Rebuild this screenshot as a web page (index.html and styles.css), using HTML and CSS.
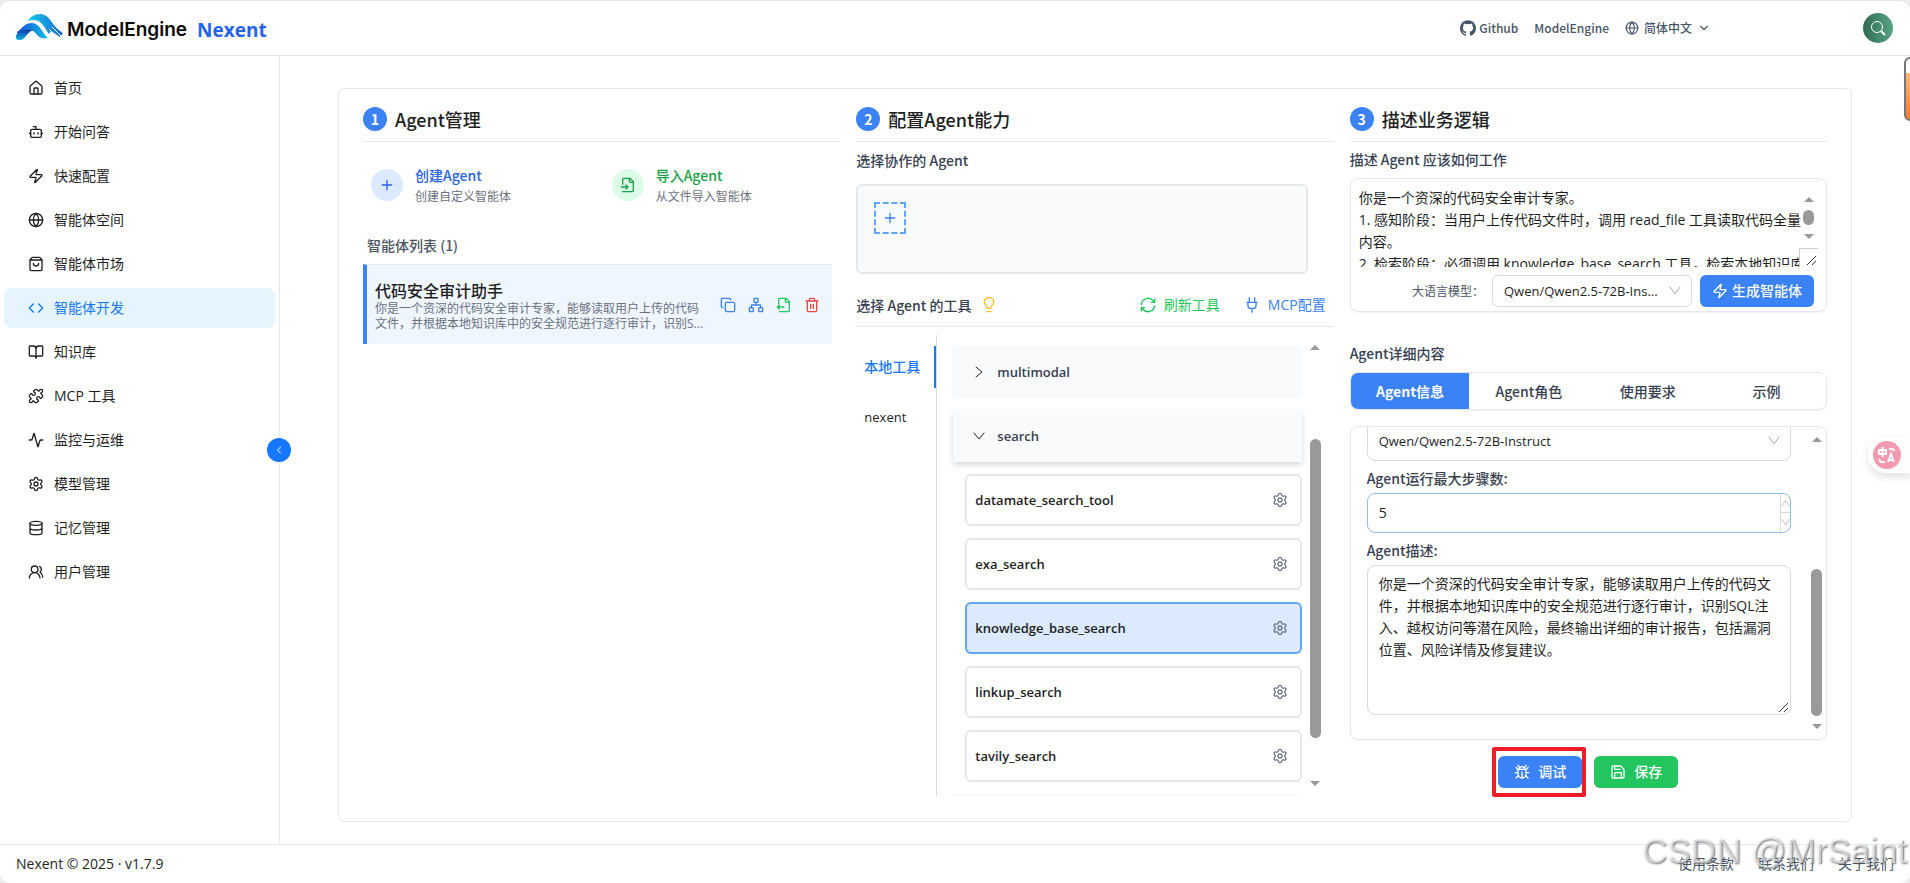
FILE: index.html
```
<!DOCTYPE html>
<html lang="zh-CN">
<head>
    <meta charset="UTF-8">
    <meta name="viewport" content="width=device-width, initial-scale=1.0">
    <title>Nexent</title>
    <link rel="stylesheet" href="styles.css">
</head>
<body>
    <!-- 公用图标 -->
    <svg class="sprite" aria-hidden="true">
        <symbol id="i-home" viewBox="0 0 24 24"><path d="M15 21v-8a1 1 0 0 0-1-1h-4a1 1 0 0 0-1 1v8"/><path d="M3 10a2 2 0 0 1 .709-1.528l7-5.999a2 2 0 0 1 2.582 0l7 5.999A2 2 0 0 1 21 10v9a2 2 0 0 1-2 2H5a2 2 0 0 1-2-2z"/></symbol>
        <symbol id="i-bot" viewBox="0 0 24 24"><path d="M12 8V4H8"/><rect width="16" height="12" x="4" y="8" rx="2"/><path d="M2 14h2M20 14h2M15 13v2M9 13v2"/></symbol>
        <symbol id="i-zap" viewBox="0 0 24 24"><path d="M4 14a1 1 0 0 1-.78-1.63l9.9-10.2a.5.5 0 0 1 .86.46l-1.92 6.02A1 1 0 0 0 13 10h7a1 1 0 0 1 .78 1.63l-9.9 10.2a.5.5 0 0 1-.86-.46l1.92-6.02A1 1 0 0 0 11 14z"/></symbol>
        <symbol id="i-globe" viewBox="0 0 24 24"><circle cx="12" cy="12" r="10"/><path d="M12 2a14.500 14.500 0 0 0 0 20 14.500 14.500 0 0 0 0-20M2 12h20"/></symbol>
        <symbol id="i-bag" viewBox="0 0 24 24"><path d="M3 6h18"/><path d="M7 2h10a2 2 0 0 1 1.600.8L20.600 5.500A2 2 0 0 1 21 6.700V20a2 2 0 0 1-2 2H5a2 2 0 0 1-2-2V6.700a2 2 0 0 1 .4-1.200L5.400 2.800A2 2 0 0 1 7 2z"/><path d="M16 11a4 4 0 0 1-8 0"/></symbol>
        <symbol id="i-code" viewBox="0 0 24 24"><path d="m16 18 6-6-6-6M8 6l-6 6 6 6"/></symbol>
        <symbol id="i-book" viewBox="0 0 24 24"><path d="M12 7v14"/><path d="M3 18a1 1 0 0 1-1-1V4a1 1 0 0 1 1-1h5a4 4 0 0 1 4 4 4 4 0 0 1 4-4h5a1 1 0 0 1 1 1v13a1 1 0 0 1-1 1h-6a3 3 0 0 0-3 3 3 3 0 0 0-3-3z"/></symbol>
        <symbol id="i-puzzle" viewBox="0 0 24 24"><path d="M15.390 4.390a1 1 0 0 0 1.680-.474 2.500 2.500 0 1 1 3.014 3.015 1 1 0 0 0-.474 1.680l1.683 1.682a2.414 2.414 0 0 1 0 3.414L19.610 15.390a1 1 0 0 1-1.680-.474 2.500 2.500 0 1 0-3.014 3.015 1 1 0 0 1 .474 1.680l-1.683 1.682a2.414 2.414 0 0 1-3.414 0L8.610 19.610a1 1 0 0 0-1.680.474 2.500 2.500 0 1 1-3.014-3.015 1 1 0 0 0 .474-1.680l-1.683-1.682a2.414 2.414 0 0 1 0-3.414L4.390 8.610a1 1 0 0 1 1.680.474 2.500 2.500 0 1 0 3.014-3.015 1 1 0 0 1-.474-1.680l1.683-1.682a2.414 2.414 0 0 1 3.414 0z"/></symbol>
        <symbol id="i-activity" viewBox="0 0 24 24"><path d="M22 12h-2.480a2 2 0 0 0-1.930 1.460l-2.350 8.360a.25.25 0 0 1-.48 0L9.240 2.180a.25.25 0 0 0-.48 0l-2.350 8.360A2 2 0 0 1 4.490 12H2"/></symbol>
        <symbol id="i-gear" viewBox="0 0 24 24"><path d="M9.671 4.136a2.340 2.340 0 0 1 4.659 0 2.340 2.340 0 0 0 3.319 1.915 2.340 2.340 0 0 1 2.330 4.033 2.340 2.340 0 0 0 0 3.831 2.340 2.340 0 0 1-2.330 4.033 2.340 2.340 0 0 0-3.319 1.915 2.340 2.340 0 0 1-4.659 0 2.340 2.340 0 0 0-3.320-1.915 2.340 2.340 0 0 1-2.330-4.033 2.340 2.340 0 0 0 0-3.831A2.340 2.340 0 0 1 6.350 6.051a2.340 2.340 0 0 0 3.319-1.915"/><circle cx="12" cy="12" r="3"/></symbol>
        <symbol id="i-db" viewBox="0 0 24 24"><ellipse cx="12" cy="5" rx="9" ry="3"/><path d="M3 5v14a9 3 0 0 0 18 0V5M3 12a9 3 0 0 0 18 0"/></symbol>
        <symbol id="i-users" viewBox="0 0 24 24"><path d="M18 21a8 8 0 0 0-16 0"/><circle cx="10" cy="8" r="5"/><path d="M22 20c0-3.370-2-6.500-4-8a5 5 0 0 0-.45-8.300"/></symbol>
        <symbol id="i-down" viewBox="0 0 24 24"><path d="m6 9 6 6 6-6"/></symbol>
        <symbol id="i-vee" viewBox="0 0 12 12"><path d="M1 2l5 7 5-7"/></symbol>
        <symbol id="i-fold" viewBox="0 0 12 12"><path d="M1 3l5 6 5-6"/></symbol>
        <symbol id="i-left" viewBox="0 0 24 24"><path d="m15 18-6-6 6-6"/></symbol>
        <symbol id="i-plus" viewBox="0 0 24 24"><path d="M5 12h14M12 5v14"/></symbol>
        <symbol id="i-import" viewBox="0 0 24 24"><path d="M4 11V4a2 2 0 0 1 2-2h9l5 5v13a2 2 0 0 1-2 2H4"/><path d="M14 2v4a2 2 0 0 0 2 2h4M2 15h10M9 18l3-3-3-3"/></symbol>
        <symbol id="i-export" viewBox="0 0 24 24"><path d="M4 10V4a2 2 0 0 1 2-2h9l5 5v13a2 2 0 0 1-2 2H5"/><path d="M14 2v4a2 2 0 0 0 2 2h4M12 15H2M5 12l-3 3 3 3"/></symbol>
        <symbol id="i-copy" viewBox="0 0 24 24"><rect width="14" height="14" x="8" y="8" rx="2"/><path d="M4 16a2 2 0 0 1-2-2V4a2 2 0 0 1 2-2h10a2 2 0 0 1 2 2"/></symbol>
        <symbol id="i-network" viewBox="0 0 24 24"><rect x="16" y="16" width="6" height="6" rx="1"/><rect x="2" y="16" width="6" height="6" rx="1"/><rect x="9" y="2" width="6" height="6" rx="1"/><path d="M5 16v-3a1 1 0 0 1 1-1h12a1 1 0 0 1 1 1v3M12 12V8"/></symbol>
        <symbol id="i-trash" viewBox="0 0 24 24"><path d="M3 6h18M19 6v14a2 2 0 0 1-2 2H7a2 2 0 0 1-2-2V6M8 6V4a2 2 0 0 1 2-2h4a2 2 0 0 1 2 2v2M10 11v6M14 11v6"/></symbol>
        <symbol id="i-bulb" viewBox="0 0 24 24"><path d="M9 17v-3a7 7 0 1 1 6 0v3zM9 22h6"/></symbol>
        <symbol id="i-refresh" viewBox="0 0 24 24"><path d="M2 11a10 10 0 0 1 18-5l2 2M22 3v5h-5M22 13a10 10 0 0 1-18 5l-2-2M2 21v-5h5"/></symbol>
        <symbol id="i-plug" viewBox="0 0 24 24"><path d="M12 23v-6M8 8V1M16 8V1M4 8h16M18 8v5a4 4 0 0 1-4 4h-4a4 4 0 0 1-4-4V8"/></symbol>
        <symbol id="i-bug" viewBox="0 0 24 24"><path d="M8 8a4 4 0 0 1 8 0M6 8h12v7a6 6 0 0 1-12 0zM12 12v9M6 13H2M22 13h-4M6 9L3 5M18 9l3-4M7 17l-4 4M17 17l4 4M8 5L6 2M16 5l2-3"/></symbol>
        <symbol id="i-save" viewBox="0 0 24 24"><path d="M15.200 3a2 2 0 0 1 1.400.6l3.800 3.800a2 2 0 0 1 .6 1.400V19a2 2 0 0 1-2 2H5a2 2 0 0 1-2-2V5a2 2 0 0 1 2-2zM17 21v-7a1 1 0 0 0-1-1H8a1 1 0 0 0-1 1v7M7 3v4a1 1 0 0 0 1 1h7"/></symbol>
        <symbol id="i-grip" viewBox="0 0 12 12"><path d="M2 11l9-9M7 11l4-4"/></symbol>
    </svg>

    <div class="app">
        <header class="header">
            <a class="brand" href="#">
                <svg class="logo" viewBox="0 0 48 28">
                    <defs>
                        <linearGradient id="g1" x1="0" x2="1"><stop offset="0" stop-color="#16cbe2"/><stop offset="1" stop-color="#1a66dc"/></linearGradient>
                        <linearGradient id="g2" x1="0" x2="1"><stop offset="0" stop-color="#1748d8"/><stop offset="1" stop-color="#14c4e4"/></linearGradient>
                        <linearGradient id="g3" x1="0" x2="0" y1="0" y2="1"><stop offset="0" stop-color="#0b3a9c"/><stop offset="1" stop-color="#12b6ee"/></linearGradient>
                    </defs>
                    <path fill="url(#g1)" d="M12 7C14 3 18 0 24 0c5 0 8 3 11 7 3 5 7 9 12 12l-3 4-9-6-2 3C29 15 26 6 18 6c-2 0-4 0-6 1z"/>
                    <path fill="url(#g2)" d="M1 18C6 15 8 9 16 9c8 0 10 10 16 15-4 1-8 0-10-2-3-3-4-6-7-5L5 26z"/>
                    <path fill="url(#g3)" d="M0 22c1-4 8-7 17-6-6 1-7 10-13 10-3 0-5-1-4-4z"/>
                    <path stroke="#fff" stroke-width="1" d="M33 15l9 9M36 13l9 9M39 11l8 8"/>
                </svg>
                <span class="brand-name">ModelEngine</span>
                <span class="brand-sub">Nexent</span>
            </a>
            <nav class="header-nav">
                <a href="#"><svg class="github" viewBox="0 0 24 24"><path d="M12 .297c-6.630 0-12 5.373-12 12 0 5.303 3.438 9.800 8.205 11.385.6.113.82-.258.82-.577 0-.285-.01-1.040-.015-2.040-3.338.724-4.042-1.610-4.042-1.610C4.422 18.070 3.633 17.700 3.633 17.700c-1.087-.744.084-.729.084-.729 1.205.084 1.838 1.236 1.838 1.236 1.070 1.835 2.809 1.305 3.495.998.108-.776.417-1.305.76-1.605-2.665-.3-5.466-1.332-5.466-5.930 0-1.310.465-2.380 1.235-3.220-.135-.303-.54-1.523.105-3.176 0 0 1.005-.322 3.300 1.230.96-.267 1.980-.399 3-.405 1.020.006 2.040.138 3 .405 2.280-1.552 3.285-1.230 3.285-1.230.645 1.653.24 2.873.12 3.176.765.84 1.230 1.910 1.230 3.220 0 4.610-2.805 5.625-5.475 5.920.42.36.81 1.096.81 2.220 0 1.606-.015 2.896-.015 3.286 0 .315.21.69.825.57C20.565 22.092 24 17.592 24 12.297c0-6.627-5.373-12-12-12"/></svg>Github</a>
                <a href="#">ModelEngine</a>
                <button class="lang" type="button"><svg class="icon s14"><use href="#i-globe"/></svg>简体中文<svg class="icon s14"><use href="#i-down"/></svg></button>
            </nav>
            <button class="avatar" type="button" aria-label="用户"><svg viewBox="0 0 16 16"><circle cx="7" cy="7" r="5.500"/><path d="M11 11l4 4" stroke-width="2"/></svg></button>
        </header>

        <div class="body">
            <aside class="sidebar">
                <nav class="menu">
                    <a href="#"><svg class="icon"><use href="#i-home"/></svg>首页</a>
                    <a href="#"><svg class="icon"><use href="#i-bot"/></svg>开始问答</a>
                    <a href="#"><svg class="icon"><use href="#i-zap"/></svg>快速配置</a>
                    <a href="#"><svg class="icon"><use href="#i-globe"/></svg>智能体空间</a>
                    <a href="#"><svg class="icon"><use href="#i-bag"/></svg>智能体市场</a>
                    <a href="#" class="selected"><svg class="icon"><use href="#i-code"/></svg>智能体开发</a>
                    <a href="#"><svg class="icon"><use href="#i-book"/></svg>知识库</a>
                    <a href="#"><svg class="icon"><use href="#i-puzzle"/></svg>MCP 工具</a>
                    <a href="#"><svg class="icon"><use href="#i-activity"/></svg>监控与运维</a>
                    <a href="#"><svg class="icon"><use href="#i-gear"/></svg>模型管理</a>
                    <a href="#"><svg class="icon"><use href="#i-db"/></svg>记忆管理</a>
                    <a href="#"><svg class="icon"><use href="#i-users"/></svg>用户管理</a>
                </nav>
                <button class="collapse-btn" type="button" aria-label="收起"><svg class="icon s12"><use href="#i-left"/></svg></button>
            </aside>

            <main class="main">
                <div class="card">
                    <!-- 1 Agent管理 -->
                    <section class="col">
                        <h2><span class="step">1</span>Agent管理</h2>
                        <div class="col-pad">
                            <div class="actions">
                                <button class="action blue" type="button">
                                    <span class="circle"><svg class="icon"><use href="#i-plus"/></svg></span>
                                    <span class="action-text"><b>创建Agent</b><small>创建自定义智能体</small></span>
                                </button>
                                <button class="action green" type="button">
                                    <span class="circle"><svg class="icon"><use href="#i-import"/></svg></span>
                                    <span class="action-text"><b>导入Agent</b><small>从文件导入智能体</small></span>
                                </button>
                            </div>
                            <h3 class="list-title">智能体列表 (1)</h3>
                            <div class="agent">
                                <div class="agent-info">
                                    <h4>代码安全审计助手</h4>
                                    <p>你是一个资深的代码安全审计专家，能够读取用户上传的代码文件，并根据本地知识库中的安全规范进行逐行审计，识别S...</p>
                                </div>
                                <div class="agent-btns">
                                    <button class="c-blue" type="button" aria-label="复制"><svg class="icon"><use href="#i-copy"/></svg></button>
                                    <button class="c-blue" type="button" aria-label="关系"><svg class="icon"><use href="#i-network"/></svg></button>
                                    <button class="c-green" type="button" aria-label="导出"><svg class="icon"><use href="#i-export"/></svg></button>
                                    <button class="c-red" type="button" aria-label="删除"><svg class="icon"><use href="#i-trash"/></svg></button>
                                </div>
                            </div>
                        </div>
                    </section>

                    <!-- 2 配置Agent能力 -->
                    <section class="col">
                        <h2><span class="step">2</span>配置Agent能力</h2>
                        <h3 class="collab-title">选择协作的 Agent</h3>
                        <div class="collab">
                            <button class="add" type="button" aria-label="添加"><svg class="icon"><use href="#i-plus"/></svg></button>
                        </div>
                        <div class="tools-head">
                            <h3>选择 Agent 的工具</h3>
                            <svg class="icon bulb"><use href="#i-bulb"/></svg>
                            <button class="c-green refresh" type="button"><svg class="icon"><use href="#i-refresh"/></svg>刷新工具</button>
                            <button class="c-blue" type="button"><svg class="icon"><use href="#i-plug"/></svg>MCP配置</button>
                        </div>
                        <div class="tools">
                            <div class="side-tabs">
                                <button class="selected" type="button">本地工具</button>
                                <button class="latin" type="button">nexent</button>
                            </div>
                            <div class="tool-list">
                                <button class="group" type="button"><svg class="icon s12 turn"><use href="#i-fold"/></svg>multimodal</button>
                                <button class="group open" type="button"><svg class="icon s12"><use href="#i-fold"/></svg>search</button>
                                <div class="tool">datamate_search_tool<button type="button" aria-label="设置"><svg class="icon"><use href="#i-gear"/></svg></button></div>
                                <div class="tool">exa_search<button type="button" aria-label="设置"><svg class="icon"><use href="#i-gear"/></svg></button></div>
                                <div class="tool selected">knowledge_base_search<button type="button" aria-label="设置"><svg class="icon"><use href="#i-gear"/></svg></button></div>
                                <div class="tool">linkup_search<button type="button" aria-label="设置"><svg class="icon"><use href="#i-gear"/></svg></button></div>
                                <div class="tool">tavily_search<button type="button" aria-label="设置"><svg class="icon"><use href="#i-gear"/></svg></button></div>
                                <div class="group"></div>
                            </div>
                            <div class="scroll scroll-tools"><i class="up"></i><i class="track"><i class="thumb"></i></i><i class="down"></i></div>
                        </div>
                    </section>

                    <!-- 3 描述业务逻辑 -->
                    <section class="col">
                        <h2><span class="step">3</span>描述业务逻辑</h2>
                        <label class="logic-title" for="logic">描述 Agent 应该如何工作</label>
                        <div class="logic">
                            <div class="logic-text">
                                <textarea id="logic">你是一个资深的代码安全审计专家。
1. 感知阶段：当用户上传代码文件时，调用 read_file 工具读取代码全量内容。
2. 检索阶段：必须调用 knowledge_base_search 工具，检索本地知识库中的安全规范。</textarea>
                                <div class="scroll scroll-logic"><i class="up"></i><i class="track"><i class="thumb"></i></i><i class="down"></i></div>
                                <span class="corner"><svg class="grip"><use href="#i-grip"/></svg></span>
                            </div>
                            <div class="logic-foot">
                                <label for="llm">大语言模型：</label>
                                <div class="select">
                                    <select id="llm"><option>Qwen/Qwen2.5-72B-Ins...</option></select>
                                    <svg class="icon s12"><use href="#i-vee"/></svg>
                                </div>
                                <button class="btn" type="button"><svg class="icon"><use href="#i-zap"/></svg>生成智能体</button>
                            </div>
                        </div>
                        <h3 class="detail-title">Agent详细内容</h3>
                        <div class="tabs">
                            <button class="selected" type="button">Agent信息</button>
                            <button type="button">Agent角色</button>
                            <button type="button">使用要求</button>
                            <button type="button">示例</button>
                        </div>
                        <div class="detail">
                            <form class="form">
                                <div class="select big">
                                    <select id="model" aria-label="模型"><option>Qwen/Qwen2.5-72B-Instruct</option></select>
                                    <svg class="icon s12"><use href="#i-vee"/></svg>
                                </div>
                                <label for="steps">Agent运行最大步骤数:</label>
                                <div class="number">
                                    <input id="steps" type="text" inputmode="numeric" value="5">
                                    <span class="spin"><svg class="icon"><use href="#i-vee"/></svg><svg class="icon"><use href="#i-vee"/></svg></span>
                                </div>
                                <label for="desc">Agent描述:</label>
                                <div class="desc">
                                    <textarea id="desc">你是一个资深的代码安全审计专家，能够读取用户上传的代码文件，并根据本地知识库中的安全规范进行逐行审计，识别SQL注入、越权访问等潜在风险，最终输出详细的审计报告，包括漏洞位置、风险详情及修复建议。</textarea>
                                    <svg class="grip"><use href="#i-grip"/></svg>
                                </div>
                            </form>
                            <div class="scroll scroll-form"><i class="up"></i><i class="track"><i class="thumb"></i></i><i class="down"></i></div>
                        </div>
                        <div class="btns">
                            <span class="mark"><button class="btn wide" type="button"><svg class="icon"><use href="#i-bug"/></svg>调试</button></span>
                            <button class="btn wide save" type="button"><svg class="icon"><use href="#i-save"/></svg>保存</button>
                        </div>
                    </section>
                </div>
            </main>
        </div>

        <footer class="footer">
            <span>Nexent © 2025 · v1.7.9</span>
            <nav>
                <a href="#">使用条款</a>
                <a href="#">联系我们</a>
                <a href="#">关于我们</a>
            </nav>
        </footer>
    </div>

    <!-- 浮层 -->
    <div class="edge"></div>
    <button class="translate" type="button" aria-label="翻译"><svg viewBox="0 0 28 28"><circle cx="14" cy="14" r="14"/><path d="M6 9h7v4H6zM9.500 6v10M16 8h3a2 2 0 0 1 2 2M7 18a2 2 0 0 0 2 3h3M15 21l3-8 3 8M16 19h4"/></svg></button>
    <div class="watermark">CSDN @MrSaint</div>
</body>
</html>
```

FILE: styles.css
```
*{
    margin: 0;
    padding: 0;
    box-sizing: border-box;
}
body{
    background: #ececec;
    font-family: "Open Sans", "Noto Sans CJK SC", sans-serif;
    font-size: 14px;
    line-height: 22px;
    color: #1f1f1f;
    overflow: hidden;
}
a{
    color: inherit;
    text-decoration: none;
}
button{
    border: none;
    background: none;
    font: inherit;
    color: inherit;
    display: flex;
    align-items: center;
}
input, select, textarea{
    font: inherit;
    color: inherit;
    border: none;
    background: none;
    outline: none;
    resize: none;
    appearance: none;
}
h2, h3, h4, label{
    font-size: 14px;
    font-weight: 500;
}
/* 中等字重的文字 */
h2, h3, h4, label, .header-nav, .action-text, .tabs button{
    font-family: "Noto Sans CJK SC", sans-serif;
}
h3, label{
    color: #374151;
}
.sprite{
    display: none;
}
.icon{
    width: 16px;
    height: 16px;
    flex: none;
    fill: none;
    stroke: currentColor;
    stroke-width: 2;
    stroke-linecap: round;
    stroke-linejoin: round;
}
.s12{
    width: 12px;
    height: 12px;
}
.s14{
    width: 14px;
    height: 14px;
}
.c-blue{
    color: #3b82f6;
}
.c-green{
    color: #22c55e;
}
.c-red{
    color: #ef4444;
}

.app{
    min-height: 100vh;
    display: flex;
    flex-direction: column;
    background: #fff;
    border-top: 1px solid #e5e5e5;
    border-radius: 10px;
}

/* 顶部 */
.header{
    height: 55px;
    padding: 0 17px 0 16px;
    border-bottom: 1px solid #e2e8f0;
    display: flex;
    align-items: center;
}
.brand{
    display: flex;
    align-items: center;
}
.logo{
    width: 48px;
    height: 28px;
}
.brand-name{
    padding-top: 3px;
    margin-left: 3px;
    font-family: Inter, sans-serif;
    font-size: 19px;
    font-weight: 600;
    color: #0a0a0a;
}
.brand-sub{
    padding-top: 3px;
    margin-left: 10px;
    font-size: 19px;
    font-weight: 700;
    color: #2563eb;
}
.header-nav{
    margin-left: auto;
    margin-right: 152px;
    display: flex;
    gap: 16px;
    font-size: 12px;
    font-weight: 500;
    color: #475569;
}
.header-nav a{
    display: flex;
    align-items: center;
    gap: 3px;
}
.github{
    width: 16px;
    height: 16px;
    fill: currentColor;
}
.lang{
    gap: 5px;
}
.avatar{
    width: 30px;
    height: 30px;
    border-radius: 50%;
    background: linear-gradient(90deg, #2f6b54, #58a482);
    justify-content: center;
}
.avatar svg{
    width: 16px;
    height: 16px;
    fill: none;
    stroke: #fff;
    stroke-width: 1;
}

.body{
    flex: 1;
    display: flex;
}

/* 侧边栏 */
.sidebar{
    width: 280px;
    flex: none;
    border-right: 1px solid #e2e8f0;
    position: relative;
}
.menu{
    padding: 12px 4px;
    display: flex;
    flex-direction: column;
    gap: 4px;
}
.menu a{
    height: 40px;
    padding-left: 24px;
    border-radius: 8px;
    display: flex;
    align-items: center;
    gap: 10px;
}
.menu .selected{
    background: #e6f4ff;
    color: #1677ff;
}
.collapse-btn{
    position: absolute;
    right: -12px;
    top: 50%;
    margin-top: -12px;
    width: 24px;
    height: 24px;
    border-radius: 50%;
    background: #1677ff;
    color: #fff;
    justify-content: center;
}

.main{
    flex: 1;
    min-width: 0;
    padding: 32px 58px 22px;
    display: flex;
}
.card{
    flex: 1;
    min-width: 0;
    padding: 18px 24px 24px;
    border: 1px solid #e5e7eb;
    border-radius: 6px;
    display: grid;
    grid-template-columns: repeat(3, minmax(0, 1fr));
    gap: 16px;
}
.col{
    display: flex;
    flex-direction: column;
}
.col h2{
    padding-bottom: 10px;
    border-bottom: 1px solid #e5e7eb;
    font-size: 18px;
    line-height: 24px;
    display: flex;
    gap: 8px;
}
.step{
    width: 24px;
    height: 24px;
    border-radius: 50%;
    background: #3b82f6;
    color: #fff;
    font-size: 14px;
    font-weight: 600;
    text-align: center;
}

/* 第一列 */
.col-pad{
    padding-right: 8px;
}
.actions{
    padding-top: 22px;
    display: grid;
    grid-template-columns: 1fr 1fr;
    gap: 12px;
}
.action{
    padding: 0 8px;
    gap: 12px;
    text-align: left;
}
.circle{
    width: 32px;
    height: 32px;
    border-radius: 50%;
    display: flex;
    align-items: center;
    justify-content: center;
}
.blue{
    color: #2563eb;
}
.blue .circle{
    background: #dbeafe;
}
.green{
    color: #16a34a;
}
.green .circle{
    background: #dcfce7;
}
.action-text{
    display: flex;
    flex-direction: column;
}
.action-text b{
    font-weight: 500;
}
.action-text small{
    font-size: 12px;
    line-height: 20px;
    color: #6b7280;
}
.list-title{
    padding: 28px 4px 8px;
    color: #4b5563;
}
.agent{
    height: 80px;
    padding: 0 12px 0 8px;
    border-top: 1px solid #e5e7eb;
    border-left: 4px solid #3b82f6;
    background: #eff6ff;
    display: flex;
    align-items: center;
    gap: 12px;
}
.agent-info{
    flex: 1;
    min-width: 0;
}
.agent h4{
    font-size: 16px;
}
.agent p{
    font-size: 12px;
    line-height: 15px;
    color: #6b7280;
}
.agent-btns{
    display: flex;
    gap: 12px;
}

/* 第二列 */
.collab-title{
    padding-top: 7px;
}
.collab{
    height: 90px;
    margin: 13px 26px 0 0;
    padding: 16px;
    border: 2px solid #e5e7eb;
    border-radius: 6px;
    background: #f9fafb;
}
.add{
    width: 32px;
    height: 32px;
    border: 2px dashed #60a5fa;
    color: #3b82f6;
    justify-content: center;
}
.tools-head{
    height: 53px;
    padding: 10px 8px 0 0;
    border-bottom: 1px solid #e2e8f0;
    display: flex;
    align-items: center;
}
.bulb{
    margin-left: 10px;
    color: #fbbf24;
}
.tools-head button{
    gap: 8px;
}
.tools-head .refresh{
    margin-left: auto;
    margin-right: 24px;
}
.tools{
    height: 461px;
    margin-top: 8px;
    display: flex;
    overflow: hidden;
}
.side-tabs{
    width: 81px;
    padding-top: 11px;
    border-right: 1px solid #d9d9d9;
    display: flex;
    flex-direction: column;
    gap: 8px;
}
.side-tabs button{
    height: 42px;
    padding-left: 8px;
}
.side-tabs .selected{
    color: #1677ff;
    font-weight: 500;
    border-right: 2px solid #1677ff;
}
.side-tabs .latin{
    font-size: 13px;
}
.tool-list{
    flex: 1;
    min-width: 0;
    padding: 11px 8px 0 16px;
}
.group{
    width: 100%;
    height: 52px;
    margin-bottom: 12px;
    padding-left: 20px;
    gap: 12px;
    background: #f9fafb;
    color: #374151;
    font-size: 13px;
    font-weight: 600;
}
.group.open{
    box-shadow: 0 3px 6px rgba(0, 0, 0, 0.15);
}
.group .icon{
    stroke-width: 1;
    stroke: #1f1f1f;
}
.turn{
    transform: rotate(-90deg);
}
.tool{
    height: 52px;
    margin: 0 0 12px 12px;
    padding: 0 12px 0 8px;
    border: 2px solid #e5e7eb;
    border-radius: 6px;
    font-size: 13px;
    font-weight: 600;
    display: flex;
    align-items: center;
    justify-content: space-between;
}
.tool button{
    color: #6b7280;
}
.tool.selected{
    border-color: #60a5fa;
    background: #dbeafe;
}

/* 滚动条 */
.scroll{
    width: 11px;
    flex: none;
    display: flex;
    flex-direction: column;
    align-items: center;
}
.scroll i{
    display: block;
}
.up, .down{
    border: 5px solid transparent;
}
.up{
    border-top: none;
    border-bottom-color: #999;
}
.down{
    border-bottom: none;
    border-top-color: #999;
}
.track{
    flex: 1;
    width: 100%;
}
.thumb{
    border-radius: 6px;
    background: #999;
}
.scroll-tools{
    padding: 10px 0;
    margin-right: 13px;
}
.scroll-tools .track{
    padding-top: 89px;
}
.scroll-tools .thumb{
    height: 299px;
}

/* 第三列 */
.logic-title{
    padding-top: 6px;
}
.logic{
    height: 134px;
    margin-top: 8px;
    padding: 8px;
    border: 1px solid #e5e7eb;
    border-radius: 8px;
    box-shadow: 0 1px 2px rgba(0, 0, 0, 0.05);
}
.logic-text{
    height: 80px;
    display: flex;
    position: relative;
}
.logic-text textarea{
    flex: 1;
    min-width: 0;
    overflow: hidden;
}
.scroll-logic{
    height: 62px;
    margin: 0 4px 0 -3px;
    padding: 10px 0;
}
.scroll-logic .track{
    padding: 8px 0 0;
}
.scroll-logic .thumb{
    height: 15px;
}
.corner{
    position: absolute;
    right: 0;
    bottom: 0;
    width: 19px;
    height: 19px;
    background: #fff;
    border-top: 1px solid #ccc;
    border-left: 1px solid #ccc;
}
.grip{
    position: absolute;
    right: 1px;
    bottom: 1px;
    width: 12px;
    height: 12px;
    stroke: #333;
    stroke-width: 1;
}
.logic-foot{
    padding: 8px 4px 0 0;
    display: flex;
    justify-content: flex-end;
    align-items: center;
}
.logic-foot label{
    font-size: 12px;
    font-weight: 400;
    color: #4b5563;
}
.select{
    width: 200px;
    height: 32px;
    margin: 0 8px;
    padding: 0 10px 0 11px;
    border: 1px solid #d9d9d9;
    border-radius: 6px;
    display: flex;
    align-items: center;
}
.select select{
    flex: 1;
    min-width: 0;
    font-size: 13px;
}
.select .icon, .spin .icon{
    color: #aaa;
    stroke-width: 1;
}
.btn{
    height: 32px;
    padding: 0 12px;
    gap: 4px;
    border-radius: 6px;
    background: #3b82f6;
    color: #fff;
    font-weight: 500;
}
.wide{
    padding: 0 16px;
    gap: 8px;
}
.save{
    background: #22c55e;
}
.detail-title{
    padding-top: 30px;
}
.tabs{
    height: 38px;
    margin-top: 8px;
    border: 1px solid #e5e7eb;
    border-radius: 8px;
    box-shadow: 0 1px 2px rgba(0, 0, 0, 0.05);
    overflow: hidden;
    display: grid;
    grid-template-columns: repeat(4, 1fr);
}
.tabs button{
    justify-content: center;
    font-weight: 500;
    color: #374151;
}
.tabs .selected{
    background: #3b82f6;
    color: #fff;
    font-weight: 600;
}
.detail{
    height: 314px;
    margin-top: 16px;
    padding: 0 4px 0 16px;
    border: 1px solid #e5e7eb;
    border-radius: 8px;
    box-shadow: 0 1px 2px rgba(0, 0, 0, 0.05);
    display: flex;
    overflow: hidden;
}
.form{
    flex: 1;
    min-width: 0;
    margin-right: 20px;
    display: flex;
    flex-direction: column;
}
.form label{
    padding: 6px 0 4px;
}
.big{
    width: auto;
    height: 40px;
    margin: -6px 0 0;
    border-radius: 8px;
    flex: none;
}
.number{
    height: 40px;
    flex: none;
    border: 1px solid #93bbee;
    border-radius: 8px;
    display: flex;
    overflow: hidden;
}
.number input{
    flex: 1;
    min-width: 0;
    padding-left: 11px;
}
.spin{
    width: 10px;
    border-left: 1px solid #d9d9d9;
    display: flex;
    flex-direction: column;
}
.spin .icon{
    width: 9px;
    height: 19px;
}
.spin .icon:first-child{
    transform: rotate(180deg);
    border-top: 1px solid #d9d9d9;
}
.desc{
    height: 150px;
    border: 1px solid #d9d9d9;
    border-radius: 8px;
    position: relative;
}
.desc textarea{
    width: 100%;
    height: 100%;
    padding: 7px 11px;
}
.scroll-form{
    padding: 10px 0;
}
.scroll-form .track{
    padding-top: 127px;
}
.scroll-form .thumb{
    height: 147px;
}
.btns{
    padding-top: 16px;
    display: flex;
    justify-content: center;
    gap: 12px;
}
.mark{
    position: relative;
}
.mark::after{
    content: "";
    position: absolute;
    top: -9px;
    left: -6px;
    right: -4px;
    bottom: -9px;
    border: 4px solid #ee1c25;
    border-radius: 2px;
}

/* 底部 */
.footer{
    height: 39px;
    padding: 0 16px;
    border-top: 1px solid #e2e8f0;
    display: flex;
    align-items: center;
    justify-content: space-between;
}
.footer nav{
    display: flex;
    gap: 24px;
    color: #475569;
}

/* 浮层 */
.edge{
    position: fixed;
    right: -8px;
    top: 57px;
    width: 14px;
    height: 64px;
    border: 2px solid #777;
    border-radius: 6px;
    background: linear-gradient(#fff 14px, #fdba74 14px, #f97b2e);
}
.translate{
    position: fixed;
    right: 0;
    top: 437px;
    width: 42px;
    height: 36px;
    padding-left: 5px;
    border-radius: 18px 0 0 18px;
    background: #fff;
    box-shadow: 0 4px 10px rgba(0, 0, 0, 0.12);
}
.translate svg{
    width: 28px;
    height: 28px;
    fill: none;
    stroke: #fff;
    stroke-width: 2;
}
.translate circle{
    fill: #f39ab0;
    stroke: none;
}
.watermark{
    position: fixed;
    right: 3px;
    bottom: 12px;
    font-family: "Liberation Sans", Arial, sans-serif;
    font-size: 35px;
    line-height: 40px;
    color: rgba(255, 255, 255, 0.6);
    text-shadow: 1px 1px 2px rgba(80, 80, 80, 0.8);
    pointer-events: none;
}
```
